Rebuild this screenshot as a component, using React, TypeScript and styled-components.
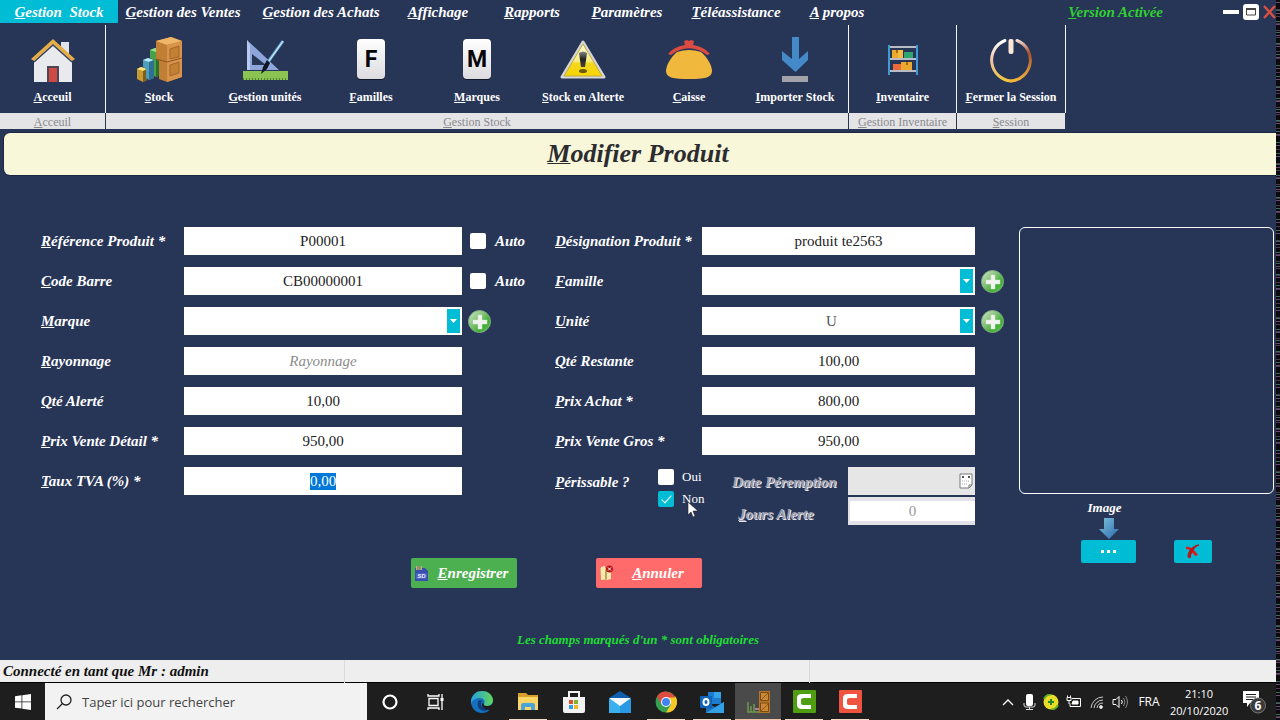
import React, { useEffect, useRef } from 'react';
import styled, { createGlobalStyle, css } from 'styled-components';

const color = {
  navy: '#273557',
  cyan: '#00bcd4',
  strip: '#e4e4e6',
  cream: '#f8f7da',
  green: '#4caf50',
  red: '#ff6b6b',
  lime: '#2fd02f',
  task: '#1e1e1e',
};

const GlobalStyle = createGlobalStyle`
  *, *::before, *::after { box-sizing: border-box; }
  body { margin: 0; background: ${color.navy}; }
  body, button, input, select { font-family: "Liberation Serif", "Times New Roman", serif; }
  button { border: 0; padding: 0; background: none; color: inherit; cursor: pointer; }
  svg { display: block; flex: none; }
  u { text-decoration-thickness: 1px; }
  ::selection { background: #0078d7; color: #fff; }
`;

const Desktop = styled.div`
  display: grid;
  grid-template-columns: minmax(0, 1fr) 4px;
  min-height: 100vh;
`;

const Screen = styled.div`
  display: flex;
  flex-direction: column;
`;

const NoiseEdge = styled.div`
  background:
    repeating-linear-gradient(0deg, transparent 0 2px, #6b4a78 2px 3px, transparent 3px 5px, #3f6b5a 5px 6px, transparent 6px 11px),
    repeating-linear-gradient(0deg, #0c0a10 0 3px, #4a3d50 3px 4px, #0c0c0c 4px 7px);
`;

const MenuBar = styled.header`
  display: flex;
  align-items: center;
  height: 25px;
  padding-bottom: 2px;
`;

const MenuNav = styled.nav`
  display: flex;
  height: 100%;
`;

const MenuItem = styled.button<{ $width: number; $active?: boolean }>`
  min-width: ${(p) => p.$width}px;
  color: #fff;
  background: ${(p) => (p.$active ? color.cyan : 'transparent')};
  font-size: 15px;
  font-weight: bold;
  font-style: italic;
  line-height: 18px;
  white-space: pre;
`;

const Version = styled.span`
  margin-left: auto;
  color: ${color.lime};
  font-size: 15px;
  font-weight: bold;
  font-style: italic;
  line-height: 18px;
`;

const WindowControls = styled.div`
  display: flex;
  align-items: center;
  gap: 4px;
  height: 20px;
  margin-left: 60px;
`;

const Ribbon = styled.div`
  display: flex;
`;

const RibbonGroup = styled.section`
  display: flex;
  flex-direction: column;
  border-right: 1px solid #f4f6fa;
`;

const RibbonButtons = styled.div`
  display: flex;
  height: 88px;
`;

const RibbonButton = styled.button<{ $width: number }>`
  display: flex;
  flex-direction: column;
  align-items: center;
  gap: 6px;
  min-width: ${(p) => p.$width}px;
  padding-top: 12px;
  color: #fff;
  font-size: 12px;
  font-weight: bold;
  line-height: 16px;
  white-space: nowrap;
`;

const RibbonCaption = styled.div`
  height: 16px;
  background: ${color.strip};
  box-shadow: 1px 0 0 ${color.navy};
  color: #8a8a8e;
  font-size: 12px;
  line-height: 18px;
  text-align: center;
`;

const Banner = styled.h1`
  margin: 4px 0 0 4px;
  border-radius: 6px 0 0 6px;
  background: ${color.cream};
  box-shadow: 0 0 0 1px #1c2742;
  color: #2c2c30;
  font-size: 26px;
  font-weight: bold;
  font-style: italic;
  line-height: 42px;
  text-align: center;
  padding-right: 4px;
`;

const Workspace = styled.main`
  flex: 1;
  padding: 52px 2px 12px 41px;
`;

const FormGrid = styled.form`
  display: grid;
  grid-template-columns: 514fr 464fr 255fr;
  align-items: start;
`;

const Fields = styled.div`
  grid-column: span 2;
  display: grid;
  grid-template-columns: 514fr 464fr;
`;

const Column = styled.div`
  display: flex;
  flex-direction: column;
  gap: 12px;
`;

const FieldRow = styled.div<{ $label: number; $extra: number }>`
  display: grid;
  grid-template-columns: ${(p) => p.$label}px minmax(0, 1fr) ${(p) => p.$extra}px;
  align-items: center;
  height: 28px;
`;

const labelText = css`
  color: #fff;
  font-size: 15px;
  font-weight: bold;
  font-style: italic;
  line-height: 18px;
  white-space: nowrap;
`;

const FieldLabel = styled.label`
  ${labelText}
`;

const TextBox = styled.input`
  width: 100%;
  height: 28px;
  padding: 0 6px;
  border: 0;
  border-radius: 0;
  outline: 0;
  background: #fff;
  color: #222;
  font-size: 15px;
  text-align: center;
  &::placeholder { color: #8c8c8c; font-style: italic; opacity: 1; }
`;

const SelectBox = styled.div`
  position: relative;
  height: 28px;
`;

const Select = styled.select`
  appearance: none;
  width: 100%;
  height: 28px;
  padding: 0 14px 0 0;
  border: 0;
  border-radius: 0;
  outline: 0;
  background: #fff;
  color: #555;
  font-size: 15px;
  text-align: center;
  text-align-last: center;
`;

const SelectArrow = styled.span`
  position: absolute;
  top: 2px;
  right: 2px;
  bottom: 2px;
  width: 13px;
  display: flex;
  align-items: center;
  justify-content: center;
  background: ${color.cyan};
  pointer-events: none;
`;

const Extra = styled.div`
  display: flex;
  align-items: center;
  padding-left: 6px;
`;

const CheckLabel = styled.label<{ $small?: boolean }>`
  position: relative;
  display: flex;
  align-items: center;
  gap: ${(p) => (p.$small ? 8 : 9)}px;
  padding-left: ${(p) => (p.$small ? 0 : 2)}px;
  color: #fff;
  font-size: ${(p) => (p.$small ? 13 : 15)}px;
  font-weight: ${(p) => (p.$small ? 'normal' : 'bold')};
  font-style: ${(p) => (p.$small ? 'normal' : 'italic')};
  line-height: 16px;
`;

const Check = styled.input`
  appearance: none;
  display: grid;
  place-items: center;
  width: 16px;
  height: 16px;
  margin: 0;
  border-radius: 2px;
  background: #fff;
  &:checked { background: ${color.cyan}; }
  &:checked::after {
    content: '';
    width: 5px;
    height: 10px;
    margin-bottom: 3px;
    border: solid #fff;
    border-width: 0 1px 1px 0;
    transform: rotate(42deg);
  }
`;

const Pointer = styled.svg`
  position: absolute;
  left: 29px;
  top: 10px;
  pointer-events: none;
`;

const Perishable = styled.div`
  display: grid;
  grid-template-columns: 103px 74px 116px minmax(0, 1fr);
  padding-right: 44px;
`;

const PerishableTitle = styled.span`
  ${labelText}
  line-height: 30px;
`;

const CheckStack = styled.div`
  display: flex;
  flex-direction: column;
  gap: 6px;
  padding-top: 2px;
`;

const Stack = styled.div`
  display: flex;
  flex-direction: column;
  gap: 2px;
`;

const DisabledLabel = styled.label<{ $indent?: boolean }>`
  ${labelText}
  line-height: 30px;
  padding-left: ${(p) => (p.$indent ? 6 : 0)}px;
  color: #9fa0ad;
  text-shadow: 1px 1px 0 #e6e6ec;
`;

const DateBox = styled.div`
  display: flex;
  align-items: center;
  height: 28px;
  padding-right: 2px;
  background: #e6e6e7;
`;

const DateInput = styled(TextBox)`
  flex: 1;
  min-width: 0;
  background: transparent;
`;

const DaysInput = styled(TextBox)`
  border: solid #e2e2e6;
  border-width: 4px 0 4px 2px;
  color: #999;
`;

const Actions = styled.div`
  grid-column: 1 / -1;
  display: flex;
  gap: 79px;
  padding: 29px 0 0 370px;
`;

const ActionButton = styled.button<{ $tone: string }>`
  display: flex;
  align-items: center;
  width: 106px;
  height: 30px;
  padding: 0 4px 0 3px;
  border-radius: 2px;
  background: ${(p) => p.$tone};
  ${labelText}
`;

const ActionText = styled.span`
  flex: 1;
  text-align: center;
  padding-left: 4px;
`;

const Side = styled.aside`
  display: flex;
  flex-direction: column;
`;

const Picture = styled.div`
  height: 267px;
  border: 1px solid #fff;
  border-radius: 6px;
`;

const PictureTools = styled.div`
  display: flex;
  align-items: flex-end;
  gap: 38px;
  padding: 6px 0 0 62px;
`;

const PictureUpload = styled.div`
  display: flex;
  flex-direction: column;
  align-items: center;
  gap: 1px;
`;

const PictureLabel = styled.span`
  padding-right: 8px;
  color: #fff;
  font-size: 13px;
  font-weight: bold;
  font-style: italic;
  line-height: 16px;
`;

const ToolButton = styled.button<{ $width: number }>`
  display: flex;
  align-items: center;
  justify-content: center;
  width: ${(p) => p.$width}px;
  height: 23px;
  border-radius: 2px;
  background: ${color.cyan};
`;

const RequiredNote = styled.p`
  margin: 44px 0 0;
  padding-right: 39px;
  color: #1edc32;
  font-size: 13px;
  font-weight: bold;
  font-style: italic;
  line-height: 16px;
  text-align: center;
`;

const StatusBar = styled.footer`
  display: grid;
  grid-template-columns: 345fr 465fr 466fr;
  height: 23px;
  border-bottom: 1px solid #000;
  background: #eeeeee;
`;

const StatusCell = styled.span`
  padding-left: 3px;
  border-right: 1px solid #dadada;
  color: #111;
  font-size: 15px;
  font-weight: bold;
  font-style: italic;
  line-height: 23px;
  white-space: nowrap;
  &:last-child { border-right: 0; }
`;

const Taskbar = styled.div`
  display: flex;
  height: 37px;
  background: ${color.task};
  color: #fff;
`;

const StartButton = styled.button`
  display: grid;
  place-items: center;
  width: 45px;
`;

const Search = styled.label`
  display: flex;
  align-items: center;
  gap: 10px;
  width: 322px;
  padding-left: 11px;
  background: #f2f2f2;
`;

const SearchInput = styled.input`
  flex: 1;
  min-width: 0;
  padding: 0;
  border: 0;
  outline: 0;
  background: transparent;
  font-family: "Open Sans", "Noto Sans", sans-serif;
  font-size: 13px;
  &::placeholder { color: #444; opacity: 1; }
`;

const TaskButton = styled.button<{ $running?: boolean; $active?: boolean }>`
  display: grid;
  place-items: center;
  width: 46px;
  background: ${(p) => (p.$active ? '#4a4a4a' : 'transparent')};
  box-shadow: ${(p) => (p.$active ? 'inset 0 -1px 0 #f0c4a0' : 'none')};
  ${(p) =>
    p.$running &&
    !p.$active &&
    css`
      background: linear-gradient(#f3d9c6, #f3d9c6) center bottom / 38px 1px no-repeat;
    `}
`;

const Tray = styled.div`
  display: flex;
  align-items: center;
  margin-left: auto;
  padding-right: 10px;
  font-family: "Open Sans", "Noto Sans", sans-serif;
  font-size: 12px;
`;

const TrayIcons = styled.div`
  display: flex;
  align-items: center;
  gap: 7px;
`;

const Language = styled.span`
  width: 42px;
  text-align: center;
`;

const Clock = styled.time`
  width: 58px;
  margin-right: 14px;
  font-size: 11px;
  line-height: 17px;
  text-align: center;
  white-space: nowrap;
`;

const Mnemonic = ({ children }: { children: string }) => (
  <span>
    <u>{children[0]}</u>
    {children.slice(1)}
  </span>
);

const HomeIcon = () => (
  <svg width="46" height="46" viewBox="0 0 46 46">
    <path d="M31 5h8v17l-8-8z" fill="#dfe3ea" />
    <path d="M4 22 23 6l19 16v23H4z" fill="#e8eaed" />
    <path d="M1 22 23 2l22 20-3 2L23 7 4 24z" fill="#e5ad43" />
    <path d="m4 25 19-17 19 17" fill="none" stroke="#3c4156" strokeWidth="1.500" />
    <rect x="17" y="29" width="12" height="16" fill="#4b4757" />
    <rect x="19" y="31" width="8" height="14" fill="#cf4a45" />
  </svg>
);

const StockIcon = () => (
  <svg width="46" height="46" viewBox="0 0 46 46">
    <path d="m1 32 4-2 6 2v11l-4 2-6-3z" fill="#c89b32" />
    <path d="m1 32 4-2 6 2-4 2z" fill="#ffe47a" />
    <path d="m7 34 4-2v11l-4 2z" fill="#7f5f1f" />
    <path d="m7 23 5-2 6 2v18l-5 2-3-2V32l-3-2z" fill="#4e9dbb" />
    <path d="m7 23 5-2 6 2-5 2z" fill="#b5e8f5" />
    <path d="m13 25 5-2v18l-5 2z" fill="#2f6f93" />
    <path d="m14 13 5-2 7 2v25l-6 2-2-1V23l-4-2z" fill="#4aa04a" />
    <path d="m14 13 5-2 7 2-6 2z" fill="#9be08b" />
    <path d="m20 15 6-2v25l-6 2z" fill="#27702e" />
    <path d="m20 4 15-4 11 4v36l-15 5-8-3V24l-3-2z" fill="#c17f35" />
    <path d="m20 4 15-4 11 4-15 4z" fill="#efb569" />
    <path d="M31 8 46 4v36l-15 5z" fill="#d8944a" />
    <path d="m34 12 9-3v11l-9 2zM34 28l9-3v11l-9 3z" fill="#c28035" stroke="#a3672a" />
    <path d="m20 22 11 3 15-4" fill="none" stroke="#8b5520" />
  </svg>
);

const UnitsIcon = () => (
  <svg width="46" height="46" viewBox="0 0 46 46">
    <path fillRule="evenodd" d="M5 3v30h32zm5 14 14 11H10z" fill="#8fa6dc" />
    <path d="M5 3v30h3V8z" fill="#b9c8f0" />
    <rect x="1" y="34" width="45" height="9" fill="#8cc454" />
    <path d="M1 42h45" stroke="#4f7f2c" strokeDasharray="1 2" strokeWidth="2" />
    <path d="M41 4 26 25" stroke="#6fb0de" strokeWidth="3" />
    <path d="M41 4 27 24" stroke="#e5f2fb" />
    <path d="m25 23 3 3-3 6-6 5 2-7z" fill="#111722" />
  </svg>
);

const LetterIcon = ({ letter }: { letter: string }) => (
  <svg width="46" height="46" viewBox="0 0 46 46">
    <defs>
      <linearGradient id={`key${letter}`} x1="0" y1="0" x2="0" y2="1">
        <stop offset="0" stopColor="#fff" />
        <stop offset="1" stopColor="#dcdce0" />
      </linearGradient>
    </defs>
    <rect x="9" y="3" width="28" height="40" rx="4" fill="#121a2d" />
    <rect x="9" y="2" width="28" height="40" rx="4" fill={`url(#key${letter})`} />
    <text x="23" y="30" textAnchor="middle" fontFamily="Roboto, sans-serif" fontWeight="bold" fontSize="23" fill="#050505">
      {letter}
    </text>
  </svg>
);

const WarningIcon = () => (
  <svg width="46" height="46" viewBox="0 0 46 46">
    <defs>
      <linearGradient id="warn" x1="0" y1="0" x2="0" y2="1">
        <stop offset="0" stopColor="#fffbe0" />
        <stop offset="0.540" stopColor="#f7ec80" />
        <stop offset="0.600" stopColor="#f3d820" />
        <stop offset="1" stopColor="#f8d400" />
      </linearGradient>
      <linearGradient id="mark" x1="0" y1="0" x2="0" y2="1">
        <stop offset="0" stopColor="#888" />
        <stop offset="0.500" stopColor="#222" />
        <stop offset="1" stopColor="#444" />
      </linearGradient>
    </defs>
    <path d="M23 5 44 40H2z" fill="#d5d5d5" stroke="#d5d5d5" strokeWidth="3" strokeLinejoin="round" />
    <path d="M23 7 42 39H4z" fill="url(#warn)" stroke="#c0ab40" strokeLinejoin="round" />
    <path d="M19 16q4-3 8 0l-2 14h-4z" fill="url(#mark)" />
    <ellipse cx="23" cy="34" rx="4" ry="2" fill="#6b5a14" />
  </svg>
);

const PurseIcon = () => (
  <svg width="46" height="46" viewBox="0 0 46 46">
    <path d="M2 17C7 11 13 9 19 8l-1-4 3-1 2 1 2-1 3 1-1 4c6 1 12 3 17 9l-3 1C30 9 16 9 5 18z" fill="#dc4b41" />
    <path d="M11 15q12-4 24 0c6 5 11 13 11 19 0 7-8 8-23 8S0 41 0 34c0-6 5-14 11-19z" fill="#f0b93d" />
  </svg>
);

const ImportIcon = () => (
  <svg width="46" height="46" viewBox="0 0 46 46">
    <path d="M20 0h7v22l9-8v9L23.500 35 10 23v-9l10 8z" fill="#4489c8" />
    <rect x="10" y="39" width="26" height="6" fill="#a2a2aa" />
  </svg>
);

const ShelfIcon = () => (
  <svg width="46" height="46" viewBox="0 0 46 46">
    <rect x="12" y="13" width="6" height="8" fill="#eaa92c" />
    <rect x="18" y="13" width="5" height="8" fill="#f2bc45" />
    <rect x="24" y="15" width="9" height="6" fill="#2fa66f" />
    <rect x="13" y="27" width="8" height="6" fill="#ea6a3c" />
    <rect x="21" y="25" width="11" height="8" fill="#eaa92c" />
    <path d="M17 13v3M27 25v3" stroke="#a56b12" strokeWidth="2" />
    <path d="M9 10h28M9 22h28M9 34h28" stroke="#b9bcc4" strokeWidth="2" />
    <path d="M9 8v30M37 8v30" stroke="#3f9ad1" strokeWidth="2" />
  </svg>
);

const PowerIcon = () => (
  <svg width="46" height="46" viewBox="0 0 46 46">
    <defs>
      <linearGradient id="power" x1="0" y1="0" x2="0" y2="1">
        <stop offset="0" stopColor="#fff" />
        <stop offset="0.500" stopColor="#efc4a4" />
        <stop offset="1" stopColor="#f2c43c" />
      </linearGradient>
      <linearGradient id="powerSide" x1="0" y1="0" x2="0" y2="1">
        <stop offset="0" stopColor="#f5dcd0" />
        <stop offset="0.300" stopColor="#a9502c" />
        <stop offset="1" stopColor="#f2b43c" />
      </linearGradient>
    </defs>
    <path d="M17 3.500A21 21 0 0 0 23 44" fill="none" stroke="url(#power)" strokeWidth="3" strokeLinecap="round" />
    <path d="M29 3.500A21 21 0 0 1 23 44" fill="none" stroke="url(#powerSide)" strokeWidth="3" strokeLinecap="round" />
    <rect x="20.500" y="2" width="5" height="15" rx="2" fill="#fbe6d8" />
  </svg>
);

const PlusIcon = () => (
  <svg width="23" height="23" viewBox="0 0 23 23">
    <defs>
      <linearGradient id="plus" x1="0" y1="0" x2="1" y2="1">
        <stop offset="0" stopColor="#d2ead0" />
        <stop offset="0.400" stopColor="#86c47a" />
        <stop offset="0.700" stopColor="#3fae32" />
        <stop offset="1" stopColor="#6fc864" />
      </linearGradient>
    </defs>
    <circle cx="11.500" cy="11.500" r="11" fill="url(#plus)" stroke="#7fa982" />
    <path d="M10 5h4v5h5v4h-5v5h-4v-5H5v-4h5z" fill="#f1f3f0" stroke="#d5e2d2" strokeWidth="0.500" />
  </svg>
);

const CalendarIcon = () => (
  <svg width="14" height="16" viewBox="0 0 14 16">
    <path d="M1 1h12v11l-3 3H1z" fill="#fff" stroke="#777" />
    <path d="M3 4h2M9 4h2" stroke="#555" strokeWidth="2" />
    <path d="M3 8h8M3 11h6" stroke="#aaa" strokeDasharray="1 1" />
    <path d="M13 12h-3v3" fill="none" stroke="#777" />
  </svg>
);

const SaveIcon = () => (
  <svg width="15" height="16" viewBox="0 0 15 16">
    <path d="M1 3h10l3 3v10H1z" fill="#3a50b0" />
    <path d="M2 1h6v4H2z" fill="#b9b38c" />
    <path d="M4 1v4M6 1v4" stroke="#6d6d5a" />
    <rect x="2" y="8" width="11" height="6" fill="#4a5fc0" />
    <text x="7.500" y="13" textAnchor="middle" fontFamily="Liberation Sans, sans-serif" fontStyle="italic" fontWeight="bold" fontSize="6" fill="#eef0ff">
      SD
    </text>
  </svg>
);

const CancelIcon = () => (
  <svg width="15" height="16" viewBox="0 0 15 16">
    <path d="M1 3h7v12H2z" fill="#d8bc6c" />
    <path d="M2 2l4-1v13l-4 1zM8 5h4v9l-4 1z" fill="#f8e8b0" />
    <path d="M7 5v9" stroke="#a0894a" />
    <circle cx="10.500" cy="4" r="3.500" fill="#b91414" />
    <path d="m9 2.500 3 3M12 2.500l-3 3" stroke="#fff" />
  </svg>
);

const DownArrowIcon = () => (
  <svg width="20" height="22" viewBox="0 0 20 22">
    <defs>
      <linearGradient id="down" x1="0" y1="0" x2="1" y2="1">
        <stop offset="0" stopColor="#7cc3dc" />
        <stop offset="1" stopColor="#2c69b0" />
      </linearGradient>
    </defs>
    <path d="M5 1h10v11h5L10 22 0 12h5z" fill="url(#down)" />
  </svg>
);

const RedCrossIcon = () => (
  <svg width="14" height="16" viewBox="0 0 14 16">
    <path d="M0 3c5-1 8 3 12 8l-3 1C6 8 4 5 0 5z" fill="#e01818" />
    <path d="M13 1C8 3 5 8 4 14l-2-1C2 7 7 2 12 1z" fill="#c01010" stroke="#c01010" />
  </svg>
);

const EdgeIcon = () => (
  <svg width="24" height="24" viewBox="0 0 24 24">
    <defs>
      <linearGradient id="edge" x1="0" y1="0" x2="1" y2="0">
        <stop offset="0" stopColor="#23a0e0" />
        <stop offset="1" stopColor="#62d65a" />
      </linearGradient>
    </defs>
    <circle cx="12" cy="12" r="11" fill="#1571c0" />
    <path d="M1 11C2 4 7 1 12 1c7 0 11 5 11 9 0 4-3 6-6 6-2 0-4-1-3-2 2-3-1-6-4-6-4 0-8 2-9 6z" fill="url(#edge)" />
    <path d="M9 10c-3 4-1 10 5 11 3 0 6-2 7-4-5 3-11 0-10-4 0-1 1-2 2-2z" fill="#0f3f7e" />
    <path d="M14 14c-1 1 1 2 3 2 3 0 5-1 6-4v4l-3 4c-5 0-9-3-8-7z" fill="#1e1e1e" />
  </svg>
);

const FolderIcon = () => (
  <svg width="22" height="20" viewBox="0 0 22 20">
    <path d="M1 1h8l2 2h10v4H1z" fill="#d99e2c" />
    <path d="M1 5h20v13H1z" fill="#fbd566" />
    <path d="M4 18v-5q0-2 2-2h10q2 0 2 2v5h-4v-3H8v3z" fill="#4ba3d9" />
  </svg>
);

const StoreIcon = () => (
  <svg width="22" height="24" viewBox="0 0 22 24">
    <path d="M6 8V2h10v6" fill="none" stroke="#f2f2f2" strokeWidth="2" />
    <path d="M0 7h22v14q0 2-2 2H2q-2 0-2-2z" fill="#f2f2f2" />
    <rect x="6" y="10" width="4" height="4" fill="#e0502c" />
    <rect x="11" y="10" width="4" height="4" fill="#7eb32a" />
    <rect x="6" y="15" width="4" height="4" fill="#2c9fe0" />
    <rect x="11" y="15" width="4" height="4" fill="#f5b820" />
  </svg>
);

const MailIcon = () => (
  <svg width="24" height="22" viewBox="0 0 24 22">
    <path d="M1 7 12 0l11 7v4H1z" fill="#0f5fae" />
    <path d="M2 7h20v8H2z" fill="#f3f8fd" />
    <path d="m1 7 11 8v7H1z" fill="#3ab0ee" />
    <path d="m23 7-11 8v7h11z" fill="#2a98e2" />
  </svg>
);

const ChromeIcon = () => (
  <svg width="22" height="22" viewBox="0 0 22 22">
    <circle cx="11" cy="11" r="10.500" fill="#35a150" />
    <path d="M11 5.500h9.500A10.500 10.500 0 0 1 11 21.500l5-8z" fill="#f6c927" />
    <path d="M6.500 13.500 2 5.500a10.500 10.500 0 0 1 18.300 1H11z" fill="#dd4b3e" />
    <circle cx="11" cy="11" r="5" fill="#fff" />
    <circle cx="11" cy="11" r="4" fill="#4384f0" />
  </svg>
);

const OutlookIcon = () => (
  <svg width="24" height="22" viewBox="0 0 24 22">
    <path d="M8 1h13v12H8z" fill="#1c7cd0" />
    <path d="M14 1h7v6h-7z" fill="#34a5ea" />
    <path d="M6 11 15 16l9-5v11H6z" fill="#1b6fc0" />
    <path d="m6 22 18-11v11z" fill="#33a0e6" />
    <rect x="0" y="5" width="12" height="12" rx="1" fill="#0f66b8" />
    <ellipse cx="6" cy="11" rx="2.500" ry="3" fill="none" stroke="#fff" strokeWidth="2" />
  </svg>
);

const CabinetIcon = () => (
  <svg width="24" height="24" viewBox="0 0 24 24">
    <path d="M2 12v10h11M5 16v6M8 14v8" fill="none" stroke="#6e9b4e" strokeWidth="1.500" />
    <path d="M9 19h4" stroke="#b47a9a" strokeWidth="2" />
    <rect x="13" y="1" width="11" height="22" fill="#b97527" />
    <path d="M14.500 2.500h8v8h-8zM14.500 13h8v8.500h-8z" fill="#c98838" stroke="#7c4a12" />
    <path d="m15 10 7-7M15 21l7-7" stroke="#8c5719" />
  </svg>
);

const CamtasiaIcon = ({ tone }: { tone: string }) => (
  <svg width="23" height="23" viewBox="0 0 23 23">
    <rect width="23" height="23" rx="1" fill={tone} />
    <path d="M18 4v4h-7q-3 0-3 2v3q0 2 3 2h7v4H9q-5 0-5-4V8q0-4 5-4z" fill="#fff" />
  </svg>
);

const WindowsIcon = () => (
  <svg width="16" height="16" viewBox="0 0 16 16" fill="#fff">
    <path d="M0 2.200 6.500 1.300v6.200H0zM7.300 1.200 16 0v7.500H7.300zM0 8.300h6.500v6.300L0 13.700zM7.300 8.300H16V16l-8.700-1.300z" />
  </svg>
);

const SearchIcon = () => (
  <svg width="16" height="16" viewBox="0 0 16 16" fill="none" stroke="#222" strokeWidth="1.300">
    <circle cx="10" cy="6" r="5" />
    <path d="M6.500 9.500 1 15" />
  </svg>
);

const TaskViewIcon = () => (
  <svg width="18" height="16" viewBox="0 0 18 16" fill="none" stroke="#fff" strokeWidth="1.300">
    <path d="M2 4.500h9v7H2zM1 0v2h11V0M1 16v-2h11v2M15 0v16" />
    <path d="M13.500 5.500h3" strokeWidth="3" />
  </svg>
);

const NotificationIcon = () => (
  <svg width="24" height="24" viewBox="0 0 24 24">
    <path d="M1 1h16v12h-9l-3 4v-4H1z" fill="#fff" />
    <path d="M4 4.500h10M4 7h10M4 9.500h7" stroke="#1e1e1e" />
    <circle cx="16" cy="15.500" r="7.500" fill="#3a3a3a" stroke="#777" />
    <text x="16" y="20" textAnchor="middle" fontFamily="Open Sans, sans-serif" fontSize="12" fontWeight="bold" fill="#fff">
      6
    </text>
  </svg>
);

const menu = [
  { text: 'Gestion  Stock', width: 118, active: true },
  { text: 'Gestion des Ventes', width: 130 },
  { text: 'Gestion des Achats', width: 146 },
  { text: 'Affichage', width: 88 },
  { text: 'Rapports', width: 100 },
  { text: 'Paramètres', width: 90 },
  { text: 'Téléassistance', width: 128 },
  { text: 'A propos', width: 74 },
];

const ribbon = [
  { caption: 'Acceuil', width: 105, items: [{ text: 'Acceuil', icon: <HomeIcon /> }] },
  {
    caption: 'Gestion Stock',
    width: 106,
    items: [
      { text: 'Stock', icon: <StockIcon /> },
      { text: 'Gestion unités', icon: <UnitsIcon /> },
      { text: 'Familles', icon: <LetterIcon letter="F" /> },
      { text: 'Marques', icon: <LetterIcon letter="M" /> },
      { text: 'Stock en Alterte', icon: <WarningIcon /> },
      { text: 'Caisse', icon: <PurseIcon /> },
      { text: 'Importer Stock', icon: <ImportIcon /> },
    ],
  },
  { caption: 'Gestion Inventaire', width: 107, items: [{ text: 'Inventaire', icon: <ShelfIcon /> }] },
  { caption: 'Session', width: 108, items: [{ text: 'Fermer la Session', icon: <PowerIcon /> }] },
];

type FieldDef = {
  id: string;
  text: string;
  value?: string;
  placeholder?: string;
  kind?: 'select';
  auto?: boolean;
  selected?: boolean;
};

const leftFields: FieldDef[] = [
  { id: 'reference', text: 'Référence Produit *', value: 'P00001', auto: true },
  { id: 'barcode', text: 'Code Barre', value: 'CB00000001', auto: true },
  { id: 'brand', text: 'Marque', kind: 'select', value: '' },
  { id: 'shelf', text: 'Rayonnage', placeholder: 'Rayonnage' },
  { id: 'alertQty', text: 'Qté Alerté', value: '10,00' },
  { id: 'retail', text: 'Prix Vente Détail *', value: '950,00' },
  { id: 'vat', text: 'Taux TVA (%) *', value: '0,00', selected: true },
];

const rightFields: FieldDef[] = [
  { id: 'name', text: 'Désignation Produit *', value: 'produit te2563' },
  { id: 'family', text: 'Famille', kind: 'select', value: '' },
  { id: 'unit', text: 'Unité', kind: 'select', value: 'U' },
  { id: 'remaining', text: 'Qté Restante', value: '100,00' },
  { id: 'purchase', text: 'Prix Achat *', value: '800,00' },
  { id: 'wholesale', text: 'Prix Vente Gros *', value: '950,00' },
];

const Field = ({ field, label, extra }: { field: FieldDef; label: number; extra: number }) => {
  const input = useRef<HTMLInputElement>(null);
  useEffect(() => {
    if (field.selected && input.current) {
      input.current.focus();
      input.current.select();
    }
  }, [field.selected]);

  return (
    <FieldRow $label={label} $extra={extra}>
      <FieldLabel htmlFor={field.id}>
        <Mnemonic>{field.text}</Mnemonic>
      </FieldLabel>
      {field.kind === 'select' ? (
        <SelectBox>
          <Select id={field.id} defaultValue={field.value}>
            <option value={field.value}>{field.value}</option>
          </Select>
          <SelectArrow>
            <svg width="7" height="4" viewBox="0 0 7 4">
              <path d="M0 0h7L3.500 4z" fill="#fff" />
            </svg>
          </SelectArrow>
        </SelectBox>
      ) : (
        <TextBox id={field.id} ref={input} defaultValue={field.value} placeholder={field.placeholder} />
      )}
      <Extra>
        {field.auto && (
          <CheckLabel>
            <Check type="checkbox" />
            Auto
          </CheckLabel>
        )}
        {field.kind === 'select' && (
          <button type="button" aria-label={`Ajouter ${field.text}`}>
            <PlusIcon />
          </button>
        )}
      </Extra>
    </FieldRow>
  );
};

const tasks = [
  {
    name: 'Cortana',
    icon: (
      <svg width="16" height="16" viewBox="0 0 16 16">
        <circle cx="8" cy="8" r="6.500" fill="none" stroke="#fff" strokeWidth="2.200" />
      </svg>
    ),
  },
  { name: 'Affichage des tâches', icon: <TaskViewIcon /> },
  { name: 'Edge', icon: <EdgeIcon /> },
  { name: 'Explorateur', icon: <FolderIcon />, running: true },
  { name: 'Store', icon: <StoreIcon /> },
  { name: 'Courrier', icon: <MailIcon /> },
  { name: 'Chrome', icon: <ChromeIcon />, running: true },
  { name: 'Outlook', icon: <OutlookIcon />, running: true },
  { name: 'Gestion Stock', icon: <CabinetIcon />, running: true, active: true },
  { name: 'Camtasia', icon: <CamtasiaIcon tone="#4f9e12" />, running: true },
  { name: 'Camtasia Recorder', icon: <CamtasiaIcon tone="#f0543f" />, running: true },
];

export default function App() {
  return (
    <>
      <GlobalStyle />
      <Desktop>
        <Screen>
          <MenuBar>
            <MenuNav>
              {menu.map((m) => (
                <MenuItem key={m.text} $width={m.width} $active={m.active}>
                  <Mnemonic>{m.text}</Mnemonic>
                </MenuItem>
              ))}
            </MenuNav>
            <Version>
              <Mnemonic>Version Activée</Mnemonic>
            </Version>
            <WindowControls>
              <button aria-label="Réduire">
                <svg width="16" height="18" viewBox="0 0 16 18">
                  <rect y="7" width="16" height="4" fill="#fff" />
                </svg>
              </button>
              <button aria-label="Agrandir">
                <svg width="16" height="18" viewBox="0 0 16 18">
                  <rect y="1" width="16" height="16" rx="3" fill="#fff" />
                  <path d="M3.500 6h9v6h-9z" fill="none" stroke="#444" />
                  <path d="M3 6h10" stroke="#444" strokeWidth="2" />
                </svg>
              </button>
              <button aria-label="Fermer">
                <svg width="13" height="18" viewBox="0 0 13 18">
                  <path d="m1 3 11 12M12 3 1 15" stroke="#d9503f" strokeWidth="2.500" />
                </svg>
              </button>
            </WindowControls>
          </MenuBar>

          <Ribbon>
            {ribbon.map((g) => (
              <RibbonGroup key={g.caption}>
                <RibbonButtons>
                  {g.items.map((b) => (
                    <RibbonButton key={b.text} $width={g.width}>
                      {b.icon}
                      <Mnemonic>{b.text}</Mnemonic>
                    </RibbonButton>
                  ))}
                </RibbonButtons>
                <RibbonCaption>
                  <Mnemonic>{g.caption}</Mnemonic>
                </RibbonCaption>
              </RibbonGroup>
            ))}
          </Ribbon>

          <Banner>
            <Mnemonic>Modifier Produit</Mnemonic>
          </Banner>

          <Workspace>
            <FormGrid onSubmit={(e) => e.preventDefault()}>
              <Fields>
                <Column>
                  {leftFields.map((f) => (
                    <Field key={f.id} field={f} label={143} extra={93} />
                  ))}
                </Column>
                <Column>
                  {rightFields.map((f) => (
                    <Field key={f.id} field={f} label={147} extra={44} />
                  ))}
                  <Perishable>
                    <PerishableTitle>
                      <Mnemonic>Périssable ?</Mnemonic>
                    </PerishableTitle>
                    <CheckStack>
                      <CheckLabel $small>
                        <Check type="checkbox" />
                        Oui
                      </CheckLabel>
                      <CheckLabel $small>
                        <Check type="checkbox" defaultChecked />
                        Non
                        <Pointer width="12" height="18" viewBox="0 0 12 18">
                          <path d="M1 1v13l3-3 2 5 2-1-2-5h5z" fill="#fff" stroke="#222" strokeWidth="0.600" />
                        </Pointer>
                      </CheckLabel>
                    </CheckStack>
                    <Stack>
                      <DisabledLabel htmlFor="expiry">Date Péremption</DisabledLabel>
                      <DisabledLabel htmlFor="days" $indent>
                        <Mnemonic>Jours Alerte</Mnemonic>
                      </DisabledLabel>
                    </Stack>
                    <Stack>
                      <DateBox>
                        <DateInput id="expiry" disabled />
                        <CalendarIcon />
                      </DateBox>
                      <DaysInput id="days" disabled defaultValue="0" />
                    </Stack>
                  </Perishable>
                </Column>
                <Actions>
                  <ActionButton type="submit" $tone={color.green}>
                    <SaveIcon />
                    <ActionText>
                      <Mnemonic>Enregistrer</Mnemonic>
                    </ActionText>
                  </ActionButton>
                  <ActionButton type="button" $tone={color.red}>
                    <CancelIcon />
                    <ActionText>
                      <Mnemonic>Annuler</Mnemonic>
                    </ActionText>
                  </ActionButton>
                </Actions>
              </Fields>

              <Side>
                <Picture />
                <PictureTools>
                  <PictureUpload>
                    <PictureLabel>Image</PictureLabel>
                    <DownArrowIcon />
                    <ToolButton type="button" $width={55} aria-label="Choisir une image">
                      <svg width="15" height="4" viewBox="0 0 15 4" fill="#fff">
                        <rect width="3" height="3" />
                        <rect x="6" width="3" height="3" />
                        <rect x="12" width="3" height="3" />
                      </svg>
                    </ToolButton>
                  </PictureUpload>
                  <ToolButton type="button" $width={38} aria-label="Supprimer l'image">
                    <RedCrossIcon />
                  </ToolButton>
                </PictureTools>
              </Side>
            </FormGrid>
            <RequiredNote>Les champs marqués d'un * sont obligatoires</RequiredNote>
          </Workspace>

          <StatusBar>
            <StatusCell>Connecté en tant que Mr : admin</StatusCell>
            <StatusCell />
            <StatusCell />
          </StatusBar>

          <Taskbar>
            <StartButton aria-label="Démarrer">
              <WindowsIcon />
            </StartButton>
            <Search>
              <SearchIcon />
              <SearchInput type="text" placeholder="Taper ici pour rechercher" />
            </Search>
            {tasks.map((t) => (
              <TaskButton key={t.name} aria-label={t.name} $running={t.running} $active={t.active}>
                {t.icon}
              </TaskButton>
            ))}
            <Tray>
              <TrayIcons>
                <svg width="14" height="16" viewBox="0 0 14 16">
                  <path d="m2 11 5-5 5 5" fill="none" stroke="#fff" strokeWidth="1.300" />
                </svg>
                <svg width="14" height="16" viewBox="0 0 14 16">
                  <rect x="4" y="0" width="7" height="12" rx="2" fill="#fff" />
                  <path d="M2 9v2q0 2 2 2h7q2 0 2-2V9M7.500 13v2M4 15.500h7" fill="none" stroke="#ddd" />
                </svg>
                <svg width="16" height="16" viewBox="0 0 16 16">
                  <circle cx="8" cy="8" r="7.500" fill="#ecdc2a" />
                  <path d="M1 5A7.500 7.500 0 0 1 8 0.500M15 11a7.500 7.500 0 0 1-7 4.500" fill="none" stroke="#5fae2a" strokeWidth="2" />
                  <path d="M8 5v6M5 8h6" stroke="#1f8a2c" strokeWidth="2" />
                </svg>
                <svg width="16" height="16" viewBox="0 0 16 16" fill="none" stroke="#fff">
                  <path d="M6 4.500h8.500v8H4v-3" />
                  <path d="M7 7h5v3H6z" fill="#fff" />
                  <path d="M1 3.500h4v3H1zM3 7v3M1.500 1.500v2M4.500 1.500v2" />
                </svg>
                <svg width="16" height="16" viewBox="0 0 16 16" fill="none" stroke="#ccc">
                  <path d="M2 14A12 12 0 0 1 14 3M5 14a9 9 0 0 1 9-8M8 14a6 6 0 0 1 6-5" />
                  <circle cx="12" cy="13" r="1.500" fill="#fff" />
                </svg>
                <svg width="16" height="16" viewBox="0 0 16 16" fill="none" stroke="#fff">
                  <path d="M1 5.500h3l3-3v11l-3-3H1z" />
                  <path d="M9.500 6q1.500 2 0 4" />
                  <path d="M11.500 4q3 4 0 8M13.500 2q4 6 0 12" stroke="#888" />
                </svg>
              </TrayIcons>
              <Language>FRA</Language>
              <Clock dateTime="2020-10-20T21:10">
                21:10
                <br />
                20/10/2020
              </Clock>
              <button aria-label="Notifications">
                <NotificationIcon />
              </button>
            </Tray>
          </Taskbar>
        </Screen>
        <NoiseEdge />
      </Desktop>
    </>
  );
}
